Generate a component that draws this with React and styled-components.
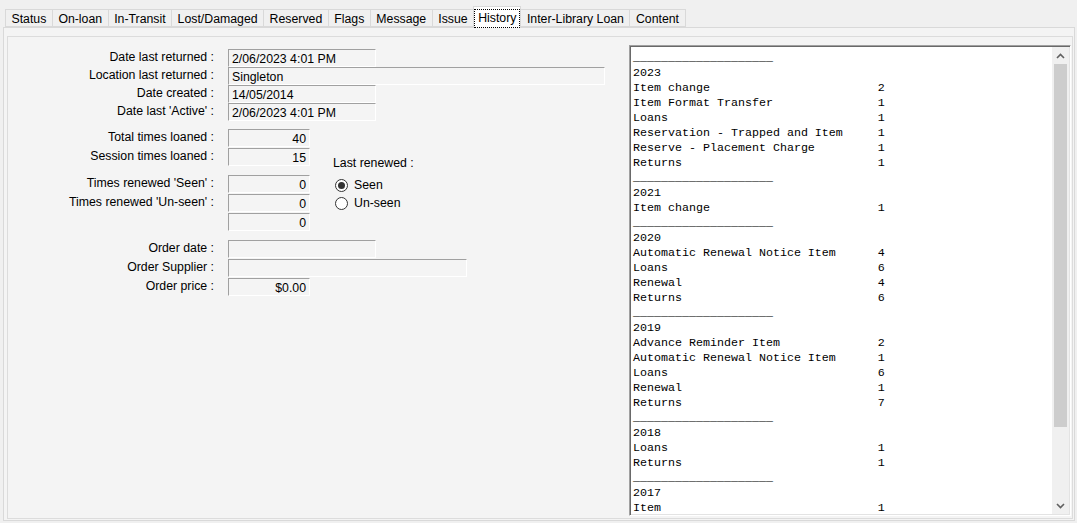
import styled, { createGlobalStyle } from "styled-components";

const GlobalStyle = createGlobalStyle`
  body {
    margin: 0;
    background: #f0f0f0;
    font-family: "Liberation Sans", Arial, sans-serif;
    font-size: 12.3px;
    color: #000;
  }
`;

const Window = styled.div`
  width: 1077px;
  height: 523px;
  display: flex;
  flex-direction: column;
  box-sizing: border-box;
  padding-top: 6px;
  overflow: hidden;
`;

//*Tab strip across the top
const TabStrip = styled.div`
  display: flex;
  align-items: flex-end;
  height: 21px;
  padding-left: 6px;
`;

const Tab = styled.div`
  position: relative;
  box-sizing: border-box;
  display: flex;
  align-items: center;
  justify-content: center;
  height: ${(props) => (props.active ? "22px" : "18px")};
  margin-left: -1px;
  margin-bottom: ${(props) => (props.active ? "-1px" : "0")};
  padding: 1px ${(props) => (props.active ? "1px" : "5.5px")} 0;
  border: 1px solid #d9d9d9;
  border-bottom: ${(props) => (props.active ? "none" : "1px solid #d9d9d9")};
  background: ${(props) => (props.active ? "#ffffff" : "#f0f0f0")};
  z-index: ${(props) => (props.active ? 1 : 0)};
  white-space: nowrap;
`;

const FocusRect = styled.span`
  outline: 1px dotted #000;
  padding: 1px 3px 2px 3px;
  line-height: 14px;
`;

const Panel = styled.div`
  box-sizing: border-box;
  height: 494px;
  margin: 0 2px 0 3px;
  border: 1px solid #d9d9d9;
  background: #f4f4f4;
  padding: 8px 1px 1px 3px;
  display: flex;
`;

const Group = styled.div`
  flex: 1;
  display: flex;
  border: 1px solid #dcdcdc;
  padding: 8px 1px 2px 0;
`;

//*Left side form
const Form = styled.div`
  flex: 1;
  display: flex;
  flex-direction: column;
  padding-top: 4px;
`;

const Section = styled.div`
  display: flex;
  flex-direction: column;
  gap: ${(props) => props.gap || 0}px;
  margin-top: ${(props) => props.top || 0}px;
`;

const Row = styled.div`
  display: flex;
  align-items: center;
  height: 18px;
`;

const Label = styled.div`
  width: 206px;
  margin-right: 14px;
  text-align: right;
  white-space: nowrap;
  transform: translateY(-1px);
`;

const Field = styled.div`
  box-sizing: border-box;
  width: ${(props) => props.w}px;
  height: 18px;
  border-top: 1px solid #a0a0a0;
  border-left: 1px solid #a0a0a0;
  border-bottom: 1px solid #ffffff;
  border-right: 1px solid #ffffff;
  padding: 0 3px;
  text-align: ${(props) => (props.num ? "right" : "left")};
  line-height: 18px;
  white-space: nowrap;
  overflow: hidden;
`;

const CountsBlock = styled.div`
  display: flex;
  margin-top: 8px;
`;

const RadioGroup = styled.div`
  display: flex;
  flex-direction: column;
  margin: 27px 0 0 23px;
`;

const RadioTitle = styled.div`
  line-height: 14px;
  margin-bottom: 6px;
`;

const RadioRow = styled.div`
  display: flex;
  align-items: center;
  height: 18px;
  padding-left: 2px;
  gap: 6px;
`;

const RadioCircle = styled.span`
  box-sizing: border-box;
  width: 13px;
  height: 13px;
  border-radius: 50%;
  border: 1px solid #333;
  background: #fff;
  display: flex;
  align-items: center;
  justify-content: center;
  &::after {
    content: "";
    width: 7px;
    height: 7px;
    border-radius: 50%;
    background: ${(props) => (props.checked ? "#333" : "transparent")};
  }
`;

//*History list on the right
const HistoryBox = styled.div`
  box-sizing: border-box;
  width: 442px;
  display: flex;
  border-top: 1px solid #a0a0a0;
  border-left: 1px solid #a0a0a0;
  border-bottom: 1px solid #ffffff;
  border-right: 1px solid #ffffff;
  box-shadow: inset 1px 1px 0 #696969, inset -1px -1px 0 #e3e3e3;
  background: #fff;
  padding: 1px;
`;

const HistoryText = styled.div`
  flex: 1;
  overflow: hidden;
  padding: 4px 0 0 2px;
  font-family: "Liberation Mono", "Courier New", monospace;
  font-size: 11.67px;
`;

const Line = styled.div`
  height: 15px;
  line-height: 15px;
  white-space: pre;
`;

const ScrollBar = styled.div`
  width: 17px;
  display: flex;
  flex-direction: column;
  background: #f0f0f0;
`;

const ScrollButton = styled.div`
  height: 17px;
  display: flex;
  align-items: center;
  justify-content: center;
`;

const Track = styled.div`
  flex: 1;
  display: flex;
  flex-direction: column;
  padding: 0 2px;
`;

const Thumb = styled.div`
  height: 363px;
  background: #cdcdcd;
`;

const Chevron = ({ down }) => (
  <svg width="9" height="6" viewBox="0 0 9 6">
    <path
      d={down ? "M1 1 L4.5 4.5 L8 1" : "M1 5 L4.5 1.5 L8 5"}
      fill="none"
      stroke="#606060"
      strokeWidth="1.6"
    />
  </svg>
);

const tabs = [
  "Status",
  "On-loan",
  "In-Transit",
  "Lost/Damaged",
  "Reserved",
  "Flags",
  "Message",
  "Issue",
  "History",
  "Inter-Library Loan",
  "Content",
];

const history = [
  ["2023", [["Item change", 2], ["Item Format Transfer", 1], ["Loans", 1], ["Reservation - Trapped and Item", 1], ["Reserve - Placement Charge", 1], ["Returns", 1]]],
  ["2021", [["Item change", 1]]],
  ["2020", [["Automatic Renewal Notice Item", 4], ["Loans", 6], ["Renewal", 4], ["Returns", 6]]],
  ["2019", [["Advance Reminder Item", 2], ["Automatic Renewal Notice Item", 1], ["Loans", 6], ["Renewal", 1], ["Returns", 7]]],
  ["2018", [["Loans", 1], ["Returns", 1]]],
  ["2017", [["Item", 1]]],
];

const historyLines = history.flatMap(([year, items]) => [
  "_".repeat(20),
  year,
  ...items.map(([name, count]) => name.padEnd(35) + count),
]);

const App = () => {
  return (
    <Window>
      <GlobalStyle />
      <TabStrip>
        {tabs.map((t) => (
          <Tab key={t} active={t === "History"}>
            {t === "History" ? <FocusRect>{t}</FocusRect> : t}
          </Tab>
        ))}
      </TabStrip>
      <Panel>
        <Group>
          <Form>
            <Section>
              <Row>
                <Label>Date last returned :</Label>
                <Field w={148}>2/06/2023 4:01 PM</Field>
              </Row>
              <Row>
                <Label>Location last returned :</Label>
                <Field w={377}>Singleton</Field>
              </Row>
              <Row>
                <Label>Date created :</Label>
                <Field w={148}>14/05/2014</Field>
              </Row>
              <Row>
                <Label>Date last 'Active' :</Label>
                <Field w={148}>2/06/2023 4:01 PM</Field>
              </Row>
            </Section>
            <CountsBlock>
              <div>
                <Section gap={1}>
                  <Row>
                    <Label>Total times loaned :</Label>
                    <Field w={82} num>40</Field>
                  </Row>
                  <Row>
                    <Label>Session times loaned :</Label>
                    <Field w={82} num>15</Field>
                  </Row>
                </Section>
                <Section gap={1} top={9}>
                  <Row>
                    <Label>Times renewed 'Seen' :</Label>
                    <Field w={82} num>0</Field>
                  </Row>
                  <Row>
                    <Label>Times renewed 'Un-seen' :</Label>
                    <Field w={82} num>0</Field>
                  </Row>
                  <Row>
                    <Label />
                    <Field w={82} num>0</Field>
                  </Row>
                </Section>
              </div>
              <RadioGroup>
                <RadioTitle>Last renewed :</RadioTitle>
                <RadioRow>
                  <RadioCircle checked />
                  Seen
                </RadioRow>
                <RadioRow>
                  <RadioCircle />
                  Un-seen
                </RadioRow>
              </RadioGroup>
            </CountsBlock>
            <Section gap={1} top={9}>
              <Row>
                <Label>Order date :</Label>
                <Field w={148} />
              </Row>
              <Row>
                <Label>Order Supplier :</Label>
                <Field w={239} />
              </Row>
              <Row>
                <Label>Order price :</Label>
                <Field w={82} num>$0.00</Field>
              </Row>
            </Section>
          </Form>
          <HistoryBox>
            <HistoryText>
              {historyLines.map((line, index) => (
                <Line key={index}>{line}</Line>
              ))}
            </HistoryText>
            <ScrollBar>
              <ScrollButton>
                <Chevron />
              </ScrollButton>
              <Track>
                <Thumb />
              </Track>
              <ScrollButton>
                <Chevron down />
              </ScrollButton>
            </ScrollBar>
          </HistoryBox>
        </Group>
      </Panel>
    </Window>
  );
};

export default App;
